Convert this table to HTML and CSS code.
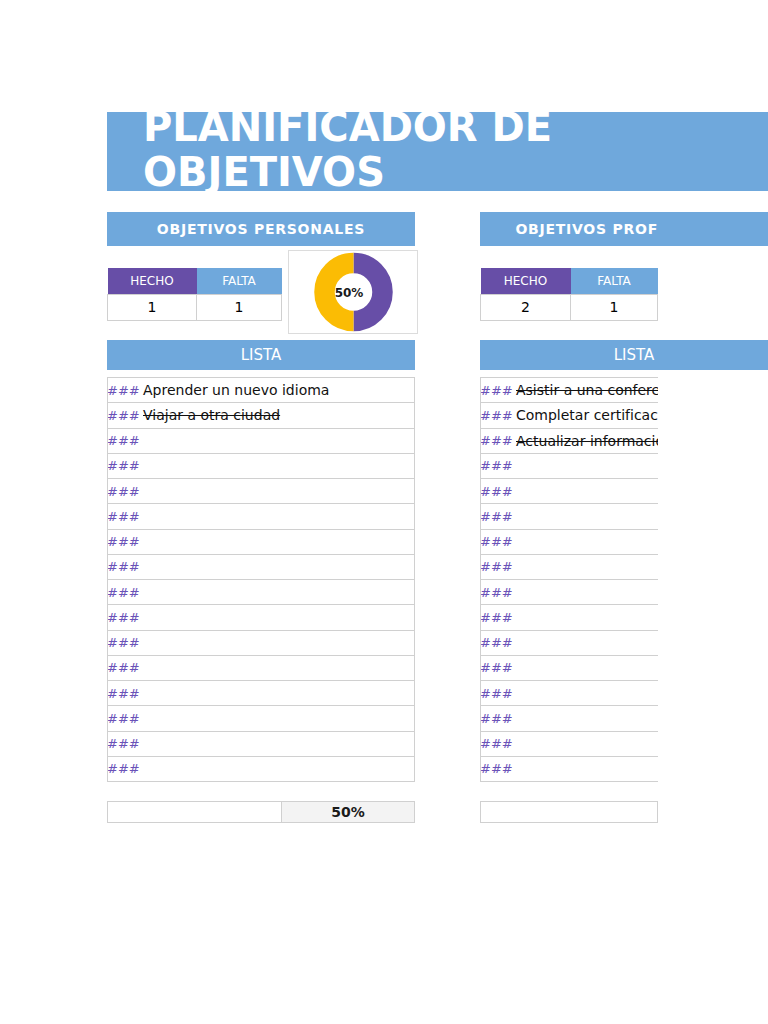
FILE: index.html
```html
<!DOCTYPE html>
<html lang="es">
<head>
<meta charset="utf-8">
<title>Planificador de objetivos</title>
<link rel="stylesheet" href="styles.css">
</head>
<body>
<div class="page">
  <header class="title-bar">
    <h1 class="title">PLANIFICADOR DE<br>OBJETIVOS</h1>
  </header>

  <div class="columns">
    <section class="col col-left">
      <div class="section-head"><div class="section-text">OBJETIVOS PERSONALES</div></div>
      <div class="stats">
        <table class="counts">
          <tr><th class="done">HECHO</th><th class="todo">FALTA</th></tr>
          <tr><td>1</td><td>1</td></tr>
        </table>
        <div class="donut-box">
          <svg width="130" height="84" viewBox="0 0 130 84">
            <path d="M65.5 13 A29 29 0 0 1 65.5 71" fill="none" stroke="#674ea7" stroke-width="20.5"/>
            <path d="M65.5 71 A29 29 0 0 1 65.5 13" fill="none" stroke="#fbbc04" stroke-width="20.5"/>
            <text x="61" y="47" text-anchor="middle" class="donut-label">50%</text>
          </svg>
        </div>
      </div>
      <div class="list-head">LISTA</div>
      <ul class="list">
        <li><span class="mark">###</span><span class="item">Aprender un nuevo idioma</span></li>
        <li><span class="mark">###</span><span class="item done-item">Viajar a otra ciudad</span></li>
        <li><span class="mark">###</span></li>
        <li><span class="mark">###</span></li>
        <li><span class="mark">###</span></li>
        <li><span class="mark">###</span></li>
        <li><span class="mark">###</span></li>
        <li><span class="mark">###</span></li>
        <li><span class="mark">###</span></li>
        <li><span class="mark">###</span></li>
        <li><span class="mark">###</span></li>
        <li><span class="mark">###</span></li>
        <li><span class="mark">###</span></li>
        <li><span class="mark">###</span></li>
        <li><span class="mark">###</span></li>
        <li><span class="mark">###</span></li>
      </ul>
      <div class="progress">
        <div class="progress-empty"></div>
        <div class="progress-value">50%</div>
      </div>
    </section>

    <section class="col col-right">
      <div class="section-head"><div class="section-text clipped">OBJETIVOS PROFESIONALES</div></div>
      <div class="stats">
        <table class="counts counts-right">
          <tr><th class="done">HECHO</th><th class="todo">FALTA</th></tr>
          <tr><td>2</td><td>1</td></tr>
        </table>
      </div>
      <div class="list-head">LISTA</div>
      <ul class="list list-right">
        <li><span class="mark">###</span><span class="item done-item">Asistir a una conferencia</span></li>
        <li><span class="mark">###</span><span class="item">Completar certificación</span></li>
        <li><span class="mark">###</span><span class="item done-item">Actualizar información</span></li>
        <li><span class="mark">###</span></li>
        <li><span class="mark">###</span></li>
        <li><span class="mark">###</span></li>
        <li><span class="mark">###</span></li>
        <li><span class="mark">###</span></li>
        <li><span class="mark">###</span></li>
        <li><span class="mark">###</span></li>
        <li><span class="mark">###</span></li>
        <li><span class="mark">###</span></li>
        <li><span class="mark">###</span></li>
        <li><span class="mark">###</span></li>
        <li><span class="mark">###</span></li>
        <li><span class="mark">###</span></li>
      </ul>
      <div class="progress progress-right"></div>
    </section>
  </div>
</div>
</body>
</html>
```

FILE: styles.css
```css
* { box-sizing: border-box; }

html, body {
  margin: 0;
  padding: 0;
  background: #ffffff;
  overflow: hidden;
}

body {
  font-family: "DejaVu Sans", Verdana, sans-serif;
  color: #000;
  width: 768px;
  height: 1024px;
}

.page {
  padding: 112px 0 0 107px;
}

.title-bar {
  background: #6fa8dc;
  height: 79px;
  padding-left: 36px;
}

.title {
  margin: 0;
  position: relative;
  top: -7px;
  font-size: 40px;
  line-height: 45px;
  font-weight: bold;
  color: #ffffff;
}

.columns {
  display: flex;
  gap: 65px;
  margin-top: 21px;
}

.col {
  display: flex;
  flex-direction: column;
  flex: none;
}

.col-left { width: 308px; }
.col-right { width: 308px; }

.section-head {
  width: 308px;
  height: 34px;
  background: #6fa8dc;
}

.section-text {
  width: 308px;
  height: 34px;
  line-height: 34px;
  text-align: center;
  color: #fff;
  font-weight: bold;
  font-size: 14px;
  letter-spacing: 0.75px;
  white-space: nowrap;
}

.section-text.clipped {
  clip-path: inset(0 130px 0 0);
}

.stats {
  display: flex;
  gap: 6px;
  margin-top: 4px;
  height: 84px;
  align-items: flex-start;
}

.counts {
  border-collapse: collapse;
  margin-top: 18px;
  width: 175px;
  table-layout: fixed;
  flex: none;
}

.counts th {
  height: 26px;
  padding: 0;
  font-size: 12px;
  font-weight: normal;
  color: #fff;
}

.counts th.done { background: #674ea7; width: 89px; }
.counts th.todo { background: #6fa8dc; }

.counts td {
  height: 26px;
  padding: 0;
  text-align: center;
  font-size: 14px;
  border: 1px solid #d0d0d0;
}

.counts-right { width: 178px; }
.counts-right th.done { width: 90px; }

.donut-box {
  flex: none;
  width: 130px;
  height: 84px;
  border: 1px solid #dcdcdc;
}

.donut-box svg { display: block; margin: -1px; }

.donut-label {
  font-family: "DejaVu Sans", Verdana, sans-serif;
  font-weight: bold;
  font-size: 12px;
  fill: #1a1a1a;
}

.list-head {
  margin-top: 6px;
  width: 308px;
  height: 30px;
  line-height: 30px;
  background: #6fa8dc;
  color: #fff;
  font-size: 15px;
  text-align: center;
}

.list {
  list-style: none;
  margin: 7px 0 0 0;
  padding: 0;
  width: 308px;
  border: 1px solid #d0d0d0;
  border-bottom: none;
}

.list li {
  height: 25.25px;
  border-bottom: 1px solid #d0d0d0;
  display: flex;
  align-items: center;
  white-space: nowrap;
  overflow: hidden;
  font-size: 14px;
}

.list-right {
  width: 178px;
  border-right: none;
}

.mark {
  width: 36px;
  flex: none;
  color: #6a52b8;
  font-size: 13px;
  margin-left: -1px;
}

.item {
  color: #111;
}

.done-item {
  text-decoration: line-through;
}

.progress {
  display: flex;
  margin-top: 19px;
  width: 308px;
  height: 22px;
  border: 1px solid #d0d0d0;
}

.progress-empty {
  width: 174px;
  border-right: 1px solid #d0d0d0;
}

.progress-value {
  flex: 1;
  background: #f3f3f3;
  text-align: center;
  font-weight: bold;
  font-size: 14px;
  line-height: 20px;
  color: #1a1a1a;
}

.progress-right {
  width: 178px;
}
```
